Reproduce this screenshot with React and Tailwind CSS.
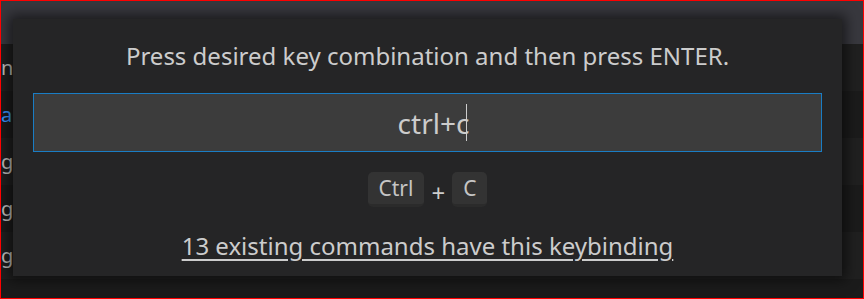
import React from 'react';

const rows = [
    { parts: [['n\u02c8', 'text-[#bdbdbd]']], bg: 'bg-[#202020]' },
    { parts: [['a', 'text-[#3794ff]'], ['lt', 'text-[#bdbdbd]']], bg: 'bg-[#1b1b1b]' },
    { parts: [['g:', 'text-[#bdbdbd]']], bg: 'bg-[#202020]' },
    { parts: [['g:', 'text-[#bdbdbd]']], bg: 'bg-[#1b1b1b]' },
    { parts: [['g:', 'text-[#bdbdbd]']], bg: 'bg-[#202020]' },
    { parts: [], bg: 'bg-[#1b1b1b]' },
];

const Key = ({ children }) => (
    <span className="inline-flex items-center justify-center h-[35px] px-[11px] rounded-[5px] bg-[#333333] border-b-[3px] border-[#2b2b2b] text-[#c5c5c5] text-[21px] leading-none">
        {children}
    </span>
);

export default function App() {
    return (
        <div
            className="relative w-[864px] h-[299px] overflow-hidden border border-[#ff0000] bg-[#1e1e1e]"
            style={{ fontFamily: '"Noto Sans", "Open Sans", sans-serif' }}
        >
            {/* editor behind the widget */}
            <div className="h-[43px] bg-[#38383e]" />
            {rows.map((r, i) => (
                <div key={i} className={`h-[47px] ${r.bg} flex items-start pt-[14px] text-[20px] leading-none whitespace-nowrap`}>
                    {r.parts.map(([t, c], j) => (
                        <span key={j} className={c}>{t}</span>
                    ))}
                </div>
            ))}

            {/* define keybinding widget */}
            <div className="absolute left-[12px] top-[18px] w-[829px] h-[257px] bg-[#252526] shadow-[0_0_12px_4px_rgba(0,0,0,0.55)] px-[20px] flex flex-col items-center">
                <p className="mt-[22px] text-[24px] leading-[30px] text-[#cccccc]">
                    Press desired key combination and then press ENTER.
                </p>
                <div className="mt-[22px] w-full h-[59px] border border-[#1a7dc4] bg-[#3c3c3c] flex items-center justify-center pl-[10px]">
                    <span className="text-[28px] text-[#cccccc] leading-none">ctrl+c</span>
                    <span className="w-px h-[37px] bg-[#cccccc] -ml-[3px]" />
                </div>
                <div className="mt-[20px] flex items-center gap-[7px] text-[#cccccc]">
                    <Key>Ctrl</Key>
                    <span className="text-[24px] leading-none mt-[6px]">+</span>
                    <Key>C</Key>
                </div>
                <a className="mt-[24px] text-[24px] leading-[30px] text-[#cccccc] underline underline-offset-[4px] decoration-[#cccccc]">
                    13 existing commands have this keybinding
                </a>
            </div>
        </div>
    );
}
